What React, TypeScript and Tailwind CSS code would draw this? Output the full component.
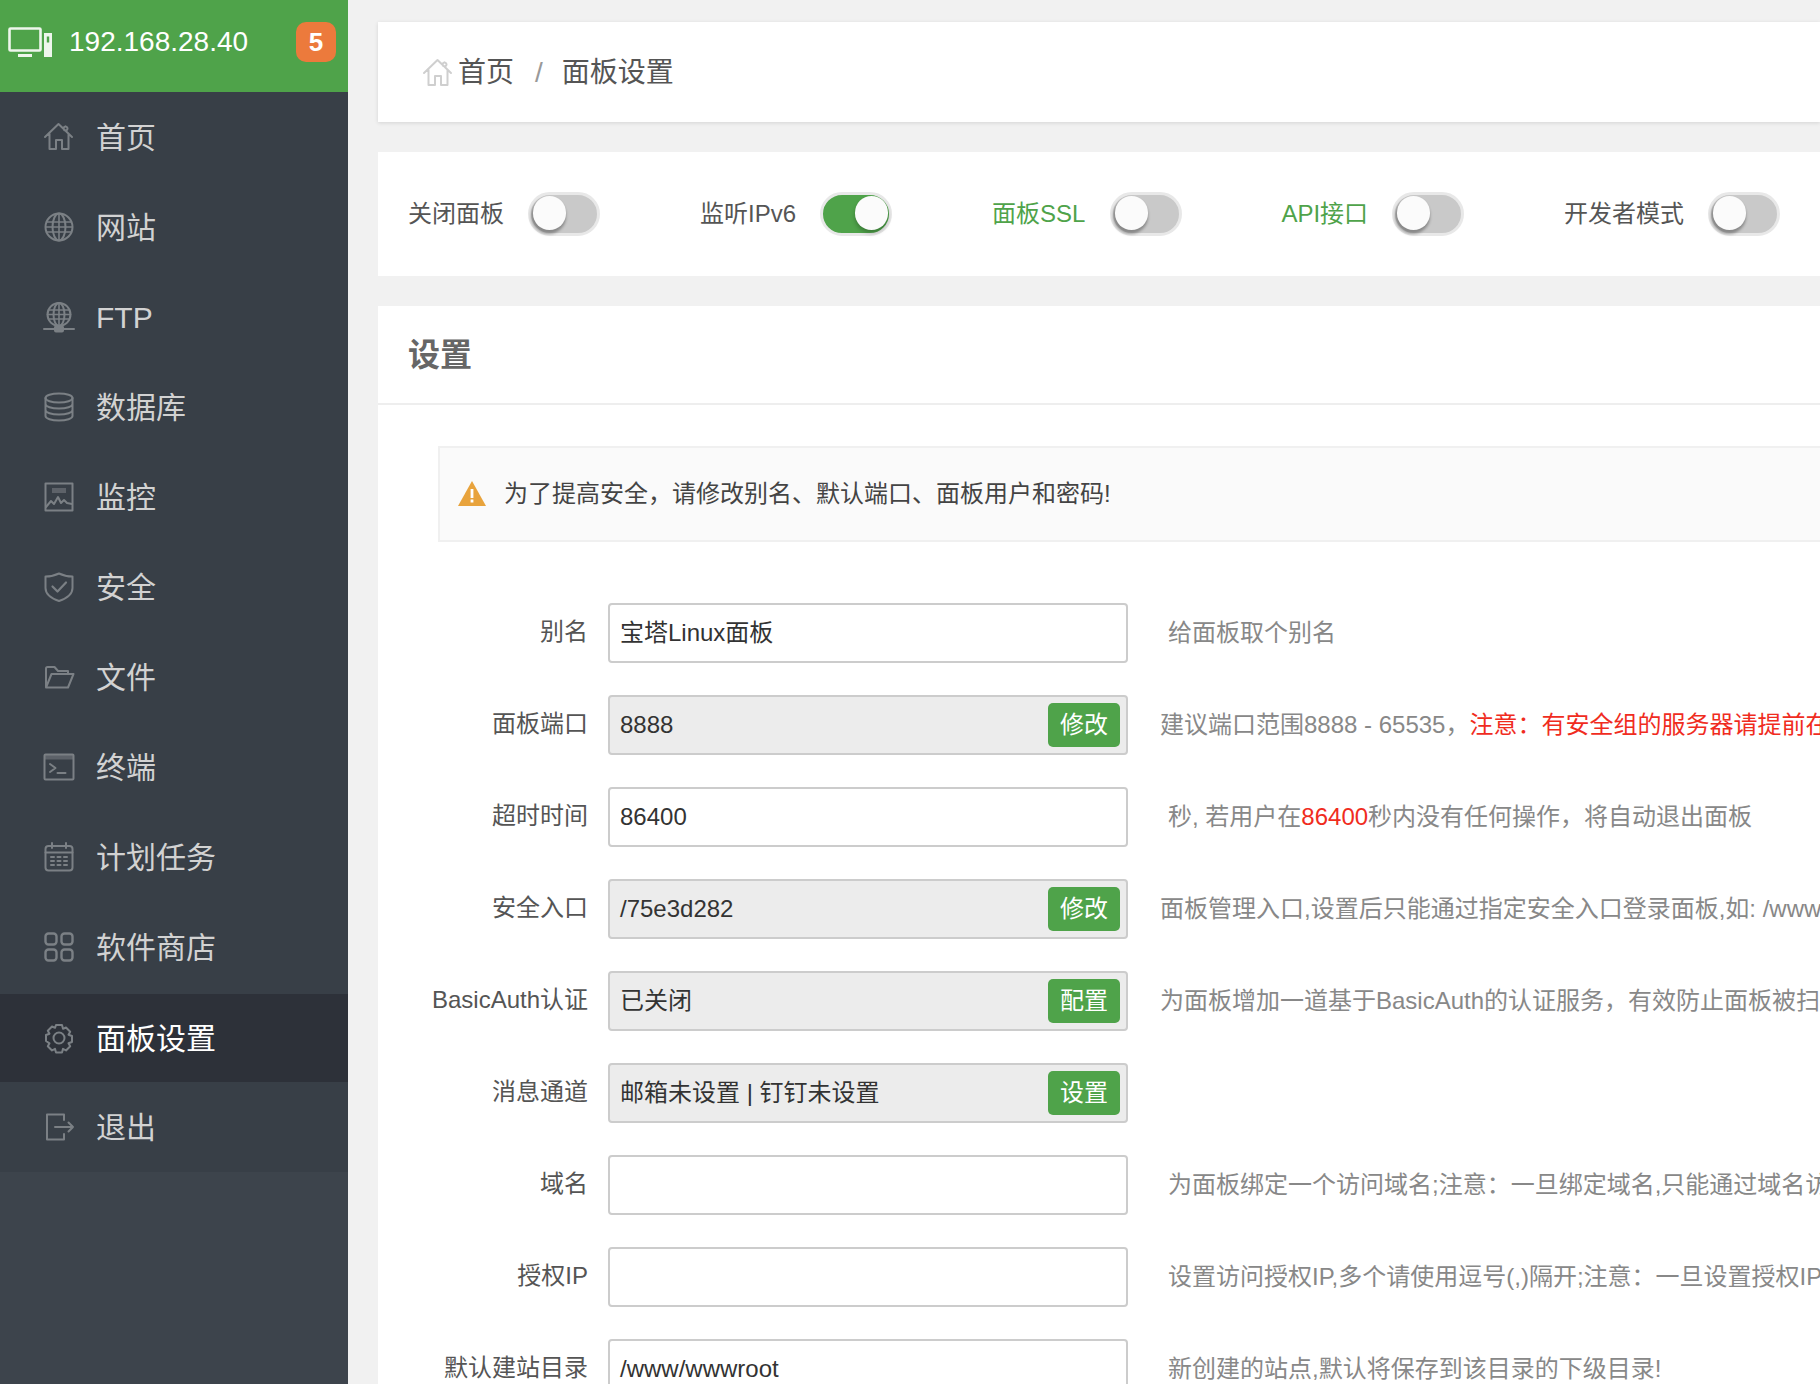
import type { ReactNode } from "react";

const FONT = "font-['Liberation_Sans','Noto_Sans_CJK_SC',sans-serif]";

function Icon({ children, className = "w-[32px] h-[32px]" }: { children: ReactNode; className?: string }) {
  return (
    <svg
      viewBox="0 0 32 32"
      fill="none"
      stroke="currentColor"
      strokeWidth="2"
      strokeLinecap="round"
      strokeLinejoin="round"
      className={className}
    >
      {children}
    </svg>
  );
}

const HomeIcon = ({ className }: { className?: string }) => (
  <Icon className={className}>
    <path d="M2 16 15.5 3 29 16M6.5 13v15h6.5v-9h6v9h6.5V13M22.5 5.5a2 2 0 1 0 .01 0" />
  </Icon>
);
const GlobeIcon = () => (
  <Icon>
    <circle cx="16" cy="16" r="13.5" />
    <ellipse cx="16" cy="16" rx="6.5" ry="13.5" />
    <path d="M16 2.5v27M3.5 11h25M3 16h26M3.5 21h25" strokeWidth="1.600" />
  </Icon>
);
const FtpIcon = () => (
  <Icon>
    <circle cx="16" cy="13.5" r="11.5" />
    <ellipse cx="16" cy="13.5" rx="5.5" ry="11.5" />
    <path d="M16 2v23M5.500 9h21M4.500 13.500h23M5.500 18h21" strokeWidth="1.600" />
    <path d="M1 28h30" />
    <rect x="12" y="25.500" width="8" height="5" rx="1" fill="currentColor" />
  </Icon>
);
const DatabaseIcon = () => (
  <Icon>
    <ellipse cx="16" cy="7" rx="13.5" ry="4.5" />
    <path d="M2.500 7v18c0 2.500 6 4.500 13.500 4.500s13.500-2 13.500-4.500V7M2.500 13c0 2.500 6 4.500 13.500 4.500s13.500-2 13.500-4.500M2.500 19c0 2.500 6 4.500 13.500 4.500s13.500-2 13.500-4.500" />
  </Icon>
);
const MonitorIcon = () => (
  <Icon>
    <rect x="2.500" y="2.500" width="27" height="27" />
    <rect x="9" y="7" width="14" height="5" fill="currentColor" stroke="none" opacity="0.55" />
    <path d="M3 26l5-6 3 3 4-7 3 6 3-3 3 3 5 1" />
  </Icon>
);
const ShieldIcon = () => (
  <Icon>
    <path d="M16 2.500c4 2 8.500 3 13.500 3v11.500c0 6-6 10.500-13.500 13-7.500-2.500-13.500-7-13.500-13V5.500c5 0 9.500-1 13.500-3Z" />
    <path d="M9.500 15.500l5 5 8.500-9" strokeWidth="2.200" />
  </Icon>
);
const FolderIcon = () => (
  <Icon>
    <path d="M3 26V7.500c0-.8.700-1.500 1.500-1.500h7l3.500 4h10v3M3 26.500h22l5.500-13.500H8.500Z" />
  </Icon>
);
const TerminalIcon = () => (
  <Icon>
    <rect x="1.500" y="3.500" width="29" height="25" rx="1" />
    <rect x="1.500" y="3.500" width="29" height="5" fill="currentColor" stroke="none" opacity="0.55" />
    <path d="M7 13l5.500 4-5.500 4M14.500 22h8" />
  </Icon>
);
const CalendarIcon = () => (
  <Icon>
    <rect x="2.500" y="5" width="27" height="24.500" rx="3" />
    <path d="M2.500 11.500h27M9 2v5M23 2v5" />
    <path d="M8 16h3M14.500 16h3M21 16h3M8 20h3M14.500 20h3M21 20h3M8 24h3M14.500 24h3M21 24h3" strokeWidth="2" />
  </Icon>
);
const StoreIcon = () => (
  <Icon>
    <rect x="2.500" y="2.500" width="11" height="11" rx="3" strokeWidth="2.400" />
    <rect x="18.500" y="2.500" width="11" height="11" rx="3" strokeWidth="2.400" />
    <rect x="2.500" y="18.500" width="11" height="11" rx="3" strokeWidth="2.400" />
    <rect x="18.500" y="18.500" width="11" height="11" rx="3" strokeWidth="2.400" />
  </Icon>
);
const GearIcon = () => (
  <Icon>
    <path d="M13 3h6l1 3.800 3-1.300 4.200 4.200-1.700 3 3.500 1.300v6l-3.500 1.300 1.700 3-4.200 4.200-3-1.700-1 3.700h-6l-1-3.700-3 1.700-4.200-4.200 1.700-3L3 19v-6l3.500-1.300-1.700-3L9 4.500l3 1.300Z" />
    <circle cx="16" cy="16" r="5.500" />
  </Icon>
);
const LogoutIcon = () => (
  <Icon>
    <path d="M21 9V3.500H4v25h17V23M12 16h18M25.500 11.500 30 16l-4.500 4.500" />
  </Icon>
);

const NAV = [
  { label: "首页", icon: <HomeIcon className="w-[32px] h-[32px]" /> },
  { label: "网站", icon: <GlobeIcon /> },
  { label: "FTP", icon: <FtpIcon /> },
  { label: "数据库", icon: <DatabaseIcon /> },
  { label: "监控", icon: <MonitorIcon /> },
  { label: "安全", icon: <ShieldIcon /> },
  { label: "文件", icon: <FolderIcon /> },
  { label: "终端", icon: <TerminalIcon /> },
  { label: "计划任务", icon: <CalendarIcon /> },
  { label: "软件商店", icon: <StoreIcon /> },
  { label: "面板设置", icon: <GearIcon />, active: true },
  { label: "退出", icon: <LogoutIcon /> },
];

function Sidebar() {
  return (
    <aside className="flex w-[348px] shrink-0 flex-col bg-[#3d444c]">
      <div className="flex h-[92px] items-center bg-[#4fa34a] pb-[8px] pl-[8px] text-white">
        <svg viewBox="0 0 44 30" fill="none" stroke="#eef6ec" strokeWidth="2.600" className="h-[30px] w-[44px]">
          <rect x="1.500" y="1.500" width="31" height="22" rx="1" />
          <path d="M10 28.500h14" strokeWidth="3" />
          <rect x="36" y="6" width="8" height="24" fill="#eef6ec" stroke="none" />
          <rect x="38.800" y="9.500" width="2.400" height="6" fill="#4fa34a" stroke="none" />
        </svg>
        <span className="ml-[17px] text-[28px] leading-none">192.168.28.40</span>
        <span className="ml-[48px] flex h-[40px] w-[40px] items-center justify-center rounded-[10px] bg-[#ec7a3c] text-[26px] font-bold">
          5
        </span>
      </div>
      {NAV.map((item) => (
        <div
          key={item.label}
          className={`flex h-[90px] items-center pl-[43px] ${item.active ? "border-t-[2px] border-[#383f47] bg-[#2d3139] text-white" : "bg-[#383f47] text-[#d2d2d2]"}`}
        >
          <span className="flex w-[32px] shrink-0 justify-center text-[#7b8085]">{item.icon}</span>
          <span className="ml-[21px] pt-[1px] text-[30px] leading-none">{item.label}</span>
        </div>
      ))}
    </aside>
  );
}

function Toggle({ on = false, className = "ml-[24px]" }: { on?: boolean; className?: string }) {
  return (
    <span
      className={`relative block h-[44px] w-[72px] shrink-0 rounded-full border-[3px] border-[#e8e8e8] ${className} ${on ? "bg-[#4fa34a]" : "bg-[#c9c9c9]"}`}
    >
      <span
        className={`absolute top-[1px] h-[34px] w-[33px] rounded-full bg-[#fbfbfb] ${on ? "right-[1px] shadow-[0_3px_4px_rgba(0,0,0,0.25)]" : "left-[2px] shadow-[-1px_3px_3px_1px_rgba(0,0,0,0.32)]"}`}
      />
    </span>
  );
}

function SwitchItem({
  label,
  on,
  green,
  className,
  toggleClass,
}: {
  label: string;
  on?: boolean;
  green?: boolean;
  className: string;
  toggleClass?: string;
}) {
  return (
    <div className={`flex shrink-0 items-center ${className}`}>
      <span className={`text-[24px] leading-none ${green ? "text-[#4fa34a]" : "text-[#555]"}`}>{label}</span>
      <Toggle on={on} className={toggleClass} />
    </div>
  );
}

const btnClass =
  "absolute right-[6px] top-[6px] flex h-[44px] w-[72px] items-center justify-center rounded-[5px] bg-[#4fa34a] text-[24px] leading-none text-white";

function Row({
  label,
  value,
  button,
  hint,
  hintIndent,
}: {
  label: string;
  value?: string;
  button?: string;
  hint?: ReactNode;
  hintIndent?: boolean;
}) {
  return (
    <div className="mb-[32px] flex h-[60px] items-center">
      <label className="w-[210px] shrink-0 pb-[3px] text-right text-[24px] leading-none text-[#555]">{label}</label>
      <div
        className={`relative ml-[20px] flex h-[60px] w-[520px] shrink-0 items-center rounded-[4px] border-[2px] border-[#cccccc] pl-[10px] text-[24px] leading-none text-[#333] ${button ? "bg-[#ececec]" : "bg-white"}`}
      >
        {value}
        {button && <span className={btnClass}>{button}</span>}
      </div>
      {hint && (
        <div className={`whitespace-nowrap text-[24px] leading-none text-[#888] ${hintIndent ? "ml-[40px]" : "ml-[32px]"}`}>
          {hint}
        </div>
      )}
    </div>
  );
}

const Red = ({ children }: { children: ReactNode }) => <span className="text-[#f02c1e]">{children}</span>;

export default function App() {
  return (
    <div className={`flex h-[1384px] w-[1820px] overflow-hidden bg-[#f1f1f1] ${FONT}`}>
      <Sidebar />
      <main className="min-w-0 flex-1 pl-[30px] pt-[22px]">
        <div className="flex h-[100px] items-center bg-white pl-[44px] pt-[2px] text-[28px] leading-none text-[#555] shadow-[0_1px_4px_rgba(0,0,0,0.12)]">
          <span className="text-[#cfcfcf]">
            <HomeIcon className="h-[32px] w-[32px]" />
          </span>
          <span className="ml-[4px]">首页</span>
          <span className="ml-[21px] text-[28px] text-[#999]">/</span>
          <span className="ml-[19px]">面板设置</span>
        </div>

        <div className="mt-[30px] flex h-[124px] items-center bg-white pl-[30px]">
          <SwitchItem label="关闭面板" className="mr-[100px]" />
          <SwitchItem label="监听IPv6" on className="mr-[100px]" />
          <SwitchItem label="面板SSL" green toggleClass="ml-[25px]" className="mr-[99px]" />
          <SwitchItem label="API接口" green className="mr-[100px]" />
          <SwitchItem label="开发者模式" className="" />
        </div>

        <div className="mt-[30px] bg-white pb-[40px]">
          <div className="flex h-[99px] items-center border-b-[2px] border-[#eeeeee] pl-[30px] text-[32px] font-bold leading-none text-[#666]">
            设置
          </div>
          <div className="pl-[60px] pt-[41px]">
            <div className="flex h-[96px] items-center border-[2px] border-r-0 border-[#f0f0f0] bg-[#fafafa] pl-[18px] text-[24px] leading-none text-[#444]">
              <svg viewBox="0 0 28 25" className="h-[25px] w-[28px] -translate-y-[1px]">
                <path d="M14 0 28 25H0Z" fill="#e8a33c" />
                <rect x="12.600" y="8" width="2.800" height="9" fill="#fff" />
                <rect x="12.600" y="18.500" width="2.800" height="3" fill="#fff" />
              </svg>
              <span className="ml-[18px]">为了提高安全，请修改别名、默认端口、面板用户和密码!</span>
            </div>
          </div>
          <div className="pt-[61px]">
            <Row label="别名" value="宝塔Linux面板" hint="给面板取个别名" hintIndent />
            <Row
              label="面板端口"
              value="8888"
              button="修改"
              hint={
                <>
                  建议端口范围8888 - 65535，<Red>注意：有安全组的服务器请提前在安全组放行新端口</Red>
                </>
              }
            />
            <Row
              label="超时时间"
              value="86400"
              hintIndent
              hint={
                <>
                  秒, 若用户在<Red>86400</Red>秒内没有任何操作，将自动退出面板
                </>
              }
            />
            <Row label="安全入口" value="/75e3d282" button="修改" hint="面板管理入口,设置后只能通过指定安全入口登录面板,如: /www_bt_panel" />
            <Row label="BasicAuth认证" value="已关闭" button="配置" hint="为面板增加一道基于BasicAuth的认证服务，有效防止面板被扫描" />
            <Row label="消息通道" value="邮箱未设置 | 钉钉未设置" button="设置" />
            <Row label="域名" hintIndent hint="为面板绑定一个访问域名;注意：一旦绑定域名,只能通过域名访问面板!" />
            <Row label="授权IP" hintIndent hint="设置访问授权IP,多个请使用逗号(,)隔开;注意：一旦设置授权IP,只有指定IP的电脑能访问面板!" />
            <Row label="默认建站目录" value="/www/wwwroot" hintIndent hint="新创建的站点,默认将保存到该目录的下级目录!" />
          </div>
        </div>
      </main>
    </div>
  );
}
